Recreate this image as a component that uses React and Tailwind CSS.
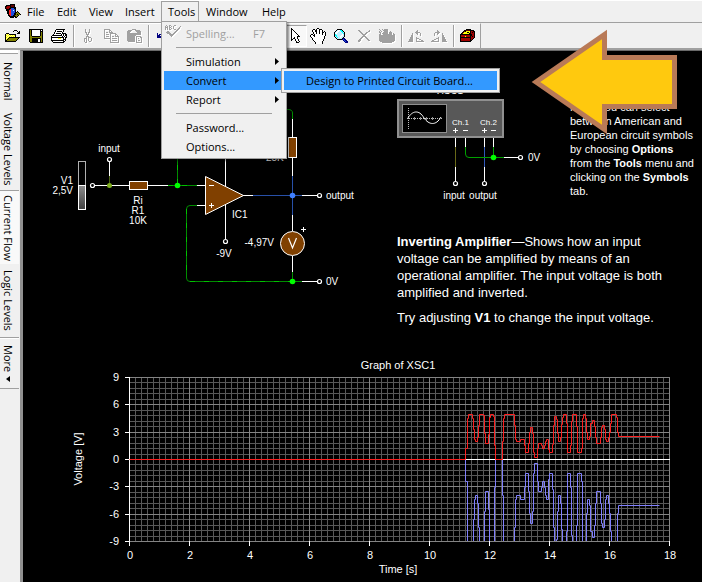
// Circuit simulator window: menu bar, toolbar, view rail and the schematic
// canvas with the oscilloscope graph underneath.

const COLORS = {
  k: '#000000',
  w: '#ffffff',
  y: '#ffff00',
  Y: '#ffff99',
  o: '#808000',
  g: '#a0a0a0',
  r: '#a00000',
  R: '#600000',
  e: '#ff2020',
  b: '#000080',
  B: '#2050e0',
  c: '#00ffff',
  C: '#c0f0ff',
};

const ICONS = {
  app: [
    '.....kkkkk......',
    '.kkkkkRRRk......',
    'kkrrrkRRRk......',
    'krrrrkkkkkk.....',
    'kRrrkkBBBkk.....',
    '.kkkkeBBBBk.....',
    '.kkkeeBBCBk.....',
    '..kkeeBBBBk.k...',
    '..kkeeBBBBkkok..',
    '..kkeeBBBkkoook.',
    '...keeBBBkkokook',
    '...kkeBBkkoook..',
    '....kkkkkkkok...',
    '.....kkkk.kk....',
  ],
  open: [
    '.........kkk....',
    '........k...k.k.',
    '.............kk.',
    '.kkk........kkk.',
    'kYyYkkkkkkk.....',
    'kyYyYyYyYyk.....',
    'kYyYyYyYyYk.....',
    'kyYykkkkkkkkkkk.',
    'kYykoooooooook..',
    'kykoooooooook...',
    'kkoooooooook....',
    'kkkkkkkkkkk.....',
  ],
  save: [
    'kkkkkkkkkkkkkk',
    'kokwwwwwwwwkwk',
    'kokwwwwwwwwkkk',
    'kokwwwwwwwwkok',
    'kokwwwwwwwwkok',
    'kokwwwwwwwwkok',
    'kokwwwwwwwwkok',
    'kookkkkkkkkook',
    'kooooooooooook',
    'kookkkkkkkkkok',
    'kookkkkkkwwkok',
    'kookkkkkkwwkok',
    'kookkkkkkwwkok',
    '.kkkkkkkkkkkkk',
  ],
  print: [
    '.....kkkkkkkkk..',
    '....kwwwwwwwk...',
    '....kwkkkkkwk...',
    '...kwwwwwwwk....',
    '...kwkkkkkwkkkk.',
    '..kwwwwwwwkwkwkk',
    '.kkkkkkkkkkwkwkk',
    'kwwwwwwwwwwkwkwk',
    'kkkkkkkkkkkkkwkk',
    'kwwwwwwyyywwkwk.',
    'kwwwwwwwwwwwkkk.',
    'kkkkkkkkkkkkkwk.',
    '.kwwwwwwwwwwkk..',
    '..kkkkkkkkkkk...',
  ],
  cut: [
    '.g...g...',
    '.g...g...',
    '.g...g...',
    '.gg.gg...',
    '..g.g....',
    '..ggg....',
    '...g.....',
    '..ggg....',
    '..g.ggg..',
    'ggg.g..g.',
    'g.g.g..g.',
    'g.g.g..g.',
    'g.g..gg..',
    '.gg......',
  ],
  copy: [
    'gggggg.........',
    'g....gg........',
    'g....g.g.......',
    'g.gg.gggg......',
    'g.....gggggg...',
    'g.ggg.g....gg..',
    'g.....g....g.g.',
    'g.ggg.g.gg.gggg',
    'g.....g.......g',
    'ggggggg.ggggg.g',
    '......g.......g',
    '......g.ggggg.g',
    '......g.......g',
    '......ggggggggg',
  ],
  paste: [
    '.....gggg......',
    '.gggg...ggggg..',
    'gggg.....ggggg.',
    'ggg.......gggg.',
    'gggggggggggggg.',
    'gggggggggggggg.',
    'ggggggggg......',
    'gggggggg.ggggg.',
    'gggggggg.g...gg',
    'gggggggg.g.g..g',
    'gggggggg.g....g',
    'gggggggg.g.gg.g',
    '.ggggggg.g....g',
    '.........gggggg',
  ],
  undo: [
    'b...bbbbb...',
    'b.bb.....b..',
    'bbb.......b.',
    'bbbb......b.',
    'bbbbb.....b.',
    '.........b..',
  ],
  pointer: [
    '..k.........',
    '..kk........',
    '..kwk.......',
    '..kwwk......',
    '..kwwwk.....',
    '..kwwwwk....',
    '..kwwwwwk...',
    '..kwwwwwwk..',
    '..kwwwwwkkk.',
    '..kwwkwwk...',
    '..kwkkwwk...',
    '..kk..kwwk..',
    '..k...kwwk..',
    '.......kwwk.',
    '.......kkk..',
  ],
  hand: [
    '.......kk.......',
    '...kk.kwwkkk....',
    '..kwwkkwwkwwk...',
    '..kwwkkwwkwwk.k.',
    '...kwwkwwkwwkkwk',
    '...kwwkwwkwwkwwk',
    '.kk.kwwwwwwwkwwk',
    'kwwkkwwwwwwwwwwk',
    'kwwwkwwwwwwwwwk.',
    '.kwwwwwwwwwwwwk.',
    '..kwwwwwwwwwwwk.',
    '..kwwwwwwwwwwk..',
    '...kwwwwwwwwwk..',
    '....kwwwwwwwk...',
    '.....kwwwwwwk...',
    '.....kwwwwwwk...',
  ],
  zoom: [
    '...kkkkk......',
    '..kCwwcck.....',
    '.kCwwCCcck....',
    'kCwwCCCCcCk...',
    'kwwCCCCCCck...',
    'kcCCCCCCwCk...',
    'kccCCCCwwCk...',
    'kCcCCCwwCCk...',
    '.kCcCCwCCk....',
    '..kCCCCCkbb...',
    '...kkkkkbBbb..',
    '.........bBbb.',
    '..........bBbb',
    '...........bbb',
  ],
  remove: [
    'gg.........g',
    '.gg.......gg',
    '..gg....gg..',
    '...gg..gg...',
    '....gggg....',
    '.....gg.....',
    '....gggg....',
    '...gg..gg...',
    '..gg....gg..',
    '.gg......gg.',
    'ggg.......gg',
    'gg..........',
  ],
  board: [
    'g..g.gggg.......',
    '.g..ggggg.......',
    'g.g..gggg..g....',
    'gg..ggggg.ggg...',
    '.g.gggggg.ggg.g.',
    'gg..ggggggggg.gg',
    'gggggggggggggggg',
    'gggggggggggggggg',
    'gggggggggggggggg',
    'gggggggggggggggg',
    'gggggggggggggggg',
    'gggggggggggggggg',
    '.gggggggggggggg.',
    '...gggggggggg...',
  ],
  flipLeft: [
    '.........g......',
    '........gg......',
    '.......ggggg....',
    '....g...gg..g...',
    '....g....g..g...',
    '...gg.......g...',
    '...gg...........',
    '..ggg...g.......',
    '..ggg...ggg.....',
    '.gggg...g..gg...',
    '.gggg...g....gg.',
    'ggggg...gggggggg',
  ],
  flipRight: [
    '......g.........',
    '......gg........',
    '....ggggg.......',
    '...g..gg...g....',
    '...g..g....g....',
    '...g.......gg...',
    '...........gg...',
    '.......g...ggg..',
    '.....ggg...ggg..',
    '...gg..g...gggg.',
    '.gg....g...gggg.',
    'gggggggg...ggggg',
  ],
  toolbox: [
    '......kkkkk.....',
    '....kkRRRRkkkk..',
    '...kRkyyyykrrkk.',
    '..kRyyykkykrkrk.',
    '.kRyyyyyykkrrrk.',
    'kkkkkkkkkkkkrrk.',
    'krrrrrrrrrkkrrk.',
    'krrrryrrrrkrkrk.',
    'kkkkkkkkkkkrrrk.',
    'krrrrrrrrrkrrk..',
    'krrrrrrrrrkrk...',
    'krrrrrrrrrkk....',
    'kkkkkkkkkkk.....',
  ],
  spelling: [
    '.g..gg...gg.....',
    'g.g.g.g.g......g',
    'ggg.gg..g.....g.',
    'g.g.g.g.g....gg.',
    'g.g.gg...gg.gg..',
    '...........gg...',
    '..gg......gg....',
    '.gggg....gg.....',
    '..gggg..gg......',
    '....ggggg.......',
    '.....ggg........',
    '......g.........',
  ],
};

function PixelIcon({ name, disabled }) {
  const rows = ICONS[name];
  const width = Math.max(...rows.map((row) => row.length));
  const draw = (shift, fill) =>
    rows.flatMap((row, y) =>
      [...row].map((ch, x) =>
        ch === '.' ? null : (
          <rect key={`${x}-${y}-${shift}`} x={x + shift} y={y + shift} width="1" height="1" fill={fill || COLORS[ch]} />
        )
      )
    );
  return (
    <svg
      width={width + 1}
      height={rows.length + 1}
      viewBox={`0 0 ${width + 1} ${rows.length + 1}`}
      shapeRendering="crispEdges"
      className="shrink-0"
      aria-hidden="true"
    >
      {disabled && draw(1, '#ffffff')}
      {draw(0)}
    </svg>
  );
}

function ToolButton({ icon, label, disabled, pressed }) {
  return (
    <button
      type="button"
      aria-label={label}
      disabled={disabled}
      className={
        pressed
          ? 'flex h-[22px] w-[23px] items-center justify-center border border-t-[#a0a0a0] border-l-[#a0a0a0] border-r-white border-b-white bg-[#f8f8f8]'
          : 'flex h-[22px] w-[23px] items-center justify-center'
      }
    >
      <PixelIcon name={icon} disabled={disabled} />
    </button>
  );
}

function Separator() {
  return (
    <div className="flex w-[6px] justify-center">
      <div className="h-[22px] w-[2px] border-r border-l border-r-white border-l-[#a0a0a0]" />
    </div>
  );
}

function MenuItem({ label, shortcut, submenu, disabled, active, children }) {
  return (
    <li className="relative">
      <button
        type="button"
        disabled={disabled}
        className={
          'flex h-[19px] w-full items-center pr-[5px] pl-[22px] text-left ' +
          (active ? 'bg-[#3399ff] ' : '') +
          (disabled ? 'text-[#a0a0a0]' : 'text-black')
        }
      >
        <span className="flex-1">{label}</span>
        {shortcut && <span className="pr-[14px]">{shortcut}</span>}
        {submenu && (
          <svg width="4" height="7" viewBox="0 0 4 7" aria-hidden="true">
            <path d="M0 0L4 3.5L0 7Z" fill="#000" />
          </svg>
        )}
      </button>
      {children}
    </li>
  );
}

function MenuDivider() {
  return <li className="mx-[12px] my-[4px] h-px bg-[#a0a0a0]" aria-hidden="true" />;
}

function ToolsMenu() {
  return (
    <ul className="absolute top-[19px] -left-px z-20 w-[126px] border border-[#a0a0a0] bg-[#f0f0f0] p-[2px] shadow-[2px_2px_2px_rgba(0,0,0,0.45)]">
      <li className="relative">
        <span className="absolute top-px left-px">
          <PixelIcon name="spelling" disabled />
        </span>
        <MenuItem label="Spelling..." shortcut="F7" disabled />
      </li>
      <MenuDivider />
      <MenuItem label="Simulation" submenu />
      <MenuItem label="Convert" submenu active>
        <ul className="absolute -top-[3px] left-[117px] z-30 w-[219px] border border-[#a0a0a0] bg-[#f0f0f0] p-[2px]">
          <MenuItem label="Design to Printed Circuit Board..." active />
        </ul>
      </MenuItem>
      <MenuItem label="Report" submenu />
      <MenuDivider />
      <MenuItem label="Password..." />
      <MenuItem label="Options..." />
    </ul>
  );
}

function MenuBar() {
  return (
    <nav className="flex h-[22px] items-center border-t border-white pl-[5px]">
      <PixelIcon name="app" />
      <button type="button" className="ml-[5px] w-[30px] text-left">File</button>
      <button type="button" className="w-[32px] text-left">Edit</button>
      <button type="button" className="w-[36px] text-left">View</button>
      <button type="button" className="w-[36px] text-left">Insert</button>
      <div className="relative h-[21px] w-[38px] border border-b-0 border-[#a0a0a0]">
        <button type="button" className="h-[20px] w-full pl-[6px] text-left">Tools</button>
        <ToolsMenu />
      </div>
      <button type="button" className="ml-[7px] w-[56px] text-left">Window</button>
      <button type="button" className="text-left">Help</button>
    </nav>
  );
}

function Toolbar() {
  return (
    <div className="flex border-t border-[#a0a0a0]">
      <div className="flex h-[25px] items-center border-t border-r border-t-white border-r-[#a0a0a0] pl-[2px]">
        <ToolButton icon="open" label="Open" />
        <ToolButton icon="save" label="Save" />
        <ToolButton icon="print" label="Print" />
        <Separator />
        <ToolButton icon="cut" label="Cut" disabled />
        <ToolButton icon="copy" label="Copy" disabled />
        <ToolButton icon="paste" label="Paste" disabled />
        <Separator />
        <ToolButton icon="undo" label="Undo" />
        <div className="w-[109px]" />
        <ToolButton icon="pointer" label="Select" pressed />
        <ToolButton icon="hand" label="Pan" />
        <ToolButton icon="zoom" label="Zoom" />
        <ToolButton icon="remove" label="Delete" disabled />
        <ToolButton icon="board" label="Gallery" disabled />
        <Separator />
        <ToolButton icon="flipLeft" label="Rotate left" disabled />
        <ToolButton icon="flipRight" label="Rotate right" disabled />
        <Separator />
        <ToolButton icon="toolbox" label="Toolbox" />
      </div>
    </div>
  );
}

function ViewRail() {
  return (
    <aside className="w-[20px] shrink-0 leading-[14px]">
      <div className="mr-[2px] h-[4px] border-b border-[#a0a0a0] bg-white" />
      <button type="button" className="flex h-[54px] w-[18px] items-center justify-center pr-[3px] [writing-mode:vertical-rl]">Normal</button>
      <button type="button" className="flex h-[82px] w-[18px] items-center justify-center pr-[3px] [writing-mode:vertical-rl]">Voltage Levels</button>
      <button type="button" className="flex h-[74px] w-[19px] items-center justify-center border-t border-[#a0a0a0] bg-[#f9f9f9] pr-[3px] [writing-mode:vertical-rl]">Current Flow</button>
      <button type="button" className="flex h-[74px] w-[19px] items-center justify-center border-b border-[#a0a0a0] pr-[4px] [writing-mode:vertical-rl]">Logic Levels</button>
      <button type="button" className="flex h-[51px] w-[19px] items-center justify-center gap-[4px] border-t border-b border-t-white border-b-[#a0a0a0] pr-[4px] [writing-mode:vertical-rl]">
        More
        <svg width="5" height="6" viewBox="0 0 5 6" aria-hidden="true">
          <path d="M5 0V6L1 3Z" fill="#000" />
        </svg>
      </button>
    </aside>
  );
}

function Terminal({ x, y }) {
  return <circle cx={x} cy={y} r="2" fill="#000" stroke="#fff" strokeWidth="1.2" />;
}

function Circuit() {
  return (
    <svg viewBox="23 51 367 300" className="h-[300px] w-[367px] shrink-0" fontSize="10" fontFamily="Liberation Sans, Arial, sans-serif">
      <defs>
        <linearGradient id="slider" x1="0" y1="0" x2="0" y2="1">
          <stop offset="0" stopColor="#8c8c8c" />
          <stop offset="1" stopColor="#404040" />
        </linearGradient>
      </defs>

      {/* wires */}
      <g fill="none" strokeWidth="1">
        <path stroke="#fff" d="M95 185.5H129M148 185.5H168M197 185.5H205M109.500 162V176M197 205.500H205M225.500 150V186M225.500 205V239M243 195.500H253M302 195.500H317M292.500 119V137M292.500 157V176M292.500 215V231M292.500 256V272M302 281.500H317" />
        <path stroke="#4c6414" d="M109.500 176V185" />
        <path stroke="#008c00" d="M168 185.500H197M177.500 109V185M177.500 109.500H288Q292.500 109.500 292.500 113V119M197 205.500H190Q186.500 205.500 186.500 209V278Q186.500 281.500 190 281.500H302M292.500 272V281" />
        <path stroke="#00c000" strokeDasharray="5 9" d="M168 185.500H197M186.500 209V278M190 281.500H302M177.500 109V185" />
        <path stroke="#2850a8" d="M253 195.500H302M292.500 176V215" />
      </g>

      {/* input slider */}
      <rect x="78.500" y="161.500" width="7" height="24" fill="#000" stroke="#b0b0b0" />
      <rect x="78.500" y="185.500" width="7" height="24" fill="url(#slider)" stroke="#fff" />

      <rect x="129.500" y="181.500" width="18" height="8" fill="#804000" stroke="#fff" />
      <rect x="288.500" y="137.500" width="8" height="20" fill="#804000" stroke="#fff" />
      <path d="M205.500 176.500V214.500L243.500 195.500Z" fill="#804000" stroke="#fff" />
      <path d="M209 185.500H214M209 205.500H214M211.500 203V208" stroke="#fff" />
      <circle cx="292.500" cy="243.500" r="12" fill="#804000" stroke="#fff" />
      <path d="M288.500 238L292.500 248L296.500 238" fill="none" stroke="#fff" strokeWidth="1.200" />
      <path d="M301 229.500H306M303.500 227V232" stroke="#fff" />

      <circle cx="109.500" cy="185.500" r="2.500" fill="#80b020" />
      <circle cx="177.500" cy="185.500" r="2.800" fill="#00ff00" />
      <circle cx="292.500" cy="281.500" r="2.800" fill="#00ff00" />
      <circle cx="292.500" cy="195.500" r="2.800" fill="#4080ff" />
      <Terminal x={92.5} y={185.5} />
      <Terminal x={109.5} y={159.5} />
      <Terminal x={225.5} y={241.5} />
      <Terminal x={319.5} y={195.5} />
      <Terminal x={319.5} y={281.5} />

      <g fill="#fff">
        <text x="109" y="152" textAnchor="middle">input</text>
        <text x="73" y="184" textAnchor="end">V1</text>
        <text x="73" y="194" textAnchor="end">2,5V</text>
        <text x="138" y="204" textAnchor="middle">Ri</text>
        <text x="138" y="214" textAnchor="middle">R1</text>
        <text x="138" y="224" textAnchor="middle">10K</text>
        <text x="266" y="161">25K</text>
        <text x="232" y="218">IC1</text>
        <text x="224" y="257" textAnchor="middle">-9V</text>
        <text x="274" y="246" textAnchor="end">-4,97V</text>
        <text x="326" y="199">output</text>
        <text x="326" y="285">0V</text>
      </g>
    </svg>
  );
}

function Oscilloscope() {
  return (
    <svg viewBox="390 51 180 164" className="h-[164px] w-[180px] shrink-0" fontSize="10" fontFamily="Liberation Sans, Arial, sans-serif">
      <rect x="398" y="100" width="105" height="37" fill="#585858" stroke="#909090" strokeWidth="2" />
      <rect x="402.500" y="104.500" width="44" height="28" fill="#000" stroke="#909090" />
      <path d="M408.500 108V129M407 118.500H442" stroke="#c0c0c0" strokeDasharray="1 1" />
      <path d="M414.500 117V120M420.500 117V120M426.500 117V120M432.500 117V120" stroke="#909090" />
      <path d="M408 118C412 111 419 109 424 118C429 125 436 126 441 117" fill="none" stroke="#fff" />
      <path d="M453 130.500H458M455.500 128V133M463 130.500H468M482 130.500H487M484.500 128V133M491 130.500H496" stroke="#fff" />

      <g fill="none">
        <path stroke="#fff" d="M455.500 138V147M465.500 138V147M484.500 138V147M493.500 138V147M455.500 167V181M484.500 167V181M504 157.500H518" />
        <path stroke="#686818" d="M455.500 147V167" />
        <path stroke="#3058b8" d="M484.500 147V167" />
        <path stroke="#00a000" d="M465.500 147V154Q465.500 157.500 469 157.500H504M493.500 147V157" />
      </g>
      <circle cx="493.500" cy="157.500" r="2.800" fill="#00ff00" />
      <Terminal x={455.5} y={183.5} />
      <Terminal x={484.5} y={183.5} />
      <Terminal x={520.5} y={157.5} />

      <g fill="#fff">
        <text x="437" y="94">XSC1</text>
        <text x="452" y="125" fontSize="8">Ch.1</text>
        <text x="480" y="125" fontSize="8">Ch.2</text>
        <text x="528" y="161">0V</text>
        <text x="454" y="199" textAnchor="middle">input</text>
        <text x="483" y="199" textAnchor="middle">output</text>
      </g>
    </svg>
  );
}

// Input trace as [x, height above zero]; each level holds until the next entry.
const SAMPLES = [
  [0, 0], [336, 11], [338, 41], [339, 45], [343, 41], [344, 30], [345, 20], [346, 18], [348, 22], [349, 34],
  [350, 45], [354, 44], [355, 26], [356, 16], [359, 25], [360, 42], [361, 45], [364, 43], [365, 14], [366, 0],
  [373, 18], [374, 41], [375, 45], [385, 34], [386, 20], [387, 18], [391, 20], [395, 14], [396, 7], [399, 16],
  [400, 27], [401, 32], [403, 26], [404, 7], [405, 2], [408, 11], [409, 16], [412, 14], [413, 11], [415, 14],
  [416, 18], [417, 20], [419, 10], [420, 7], [423, 15], [424, 34], [425, 43], [427, 40], [428, 26], [429, 18],
  [431, 22], [432, 35], [433, 42], [434, 45], [437, 36], [438, 7], [441, 14], [442, 38], [443, 45], [447, 33],
  [448, 7], [452, 11], [453, 41], [454, 45], [456, 41], [457, 27], [458, 20], [460, 23], [461, 36], [463, 39],
  [465, 33], [466, 22], [467, 16], [471, 22], [472, 32], [473, 34], [475, 30], [476, 20], [477, 18], [479, 22],
  [480, 27], [481, 36], [482, 45], [487, 42], [488, 27], [489, 23],
];

function tracePoints(gain) {
  const points = [];
  let level = 459.5;
  for (const [x, v] of SAMPLES) {
    points.push(`${x + 129.5},${level}`);
    level = 459.5 - v * gain;
    points.push(`${x + 129.5},${level}`);
  }
  points.push(`659.5,${level}`);
  return points.join(' ');
}

const seq = (n) => Array.from({ length: n }, (_, i) => i);

function Graph() {
  return (
    <svg viewBox="23 351 679 231" className="h-auto w-full" fontSize="11" fontFamily="Liberation Sans, Arial, sans-serif">
      <clipPath id="plot">
        <rect x="129" y="377" width="541" height="164" />
      </clipPath>
      <g shapeRendering="crispEdges" fill="none">
        <g stroke="#585858">
          {seq(91).map((i) => <path key={i} d={`M${129.5 + i * 6} 377V541`} />)}
          {seq(31).map((i) => <path key={i} d={`M129 ${Math.round(377 + i * 5.467) + 0.5}H670`} />)}
        </g>
        <g stroke="#848484">
          {seq(10).map((i) => <path key={i} d={`M${129.5 + i * 60} 377V541`} />)}
          {seq(7).map((i) => <path key={i} d={`M129 ${Math.round(377 + i * 27.333) + 0.5}H670`} />)}
        </g>
        <g stroke="#fff">
          {seq(10).map((i) => <path key={i} d={`M${129.5 + i * 60} 541V546`} />)}
          {seq(7).map((i) => <path key={i} d={`M125 ${Math.round(377 + i * 27.333) + 0.5}H130`} />)}
          <path d="M129.500 377V541" />
        </g>
      </g>
      <g clipPath="url(#plot)" fill="none" strokeWidth="1">
        <polyline points={tracePoints(-2)} stroke="#8080ff" />
        <path d="M129 459.500H670" stroke="#fff" />
        <polyline points={tracePoints(1)} stroke="#ff2020" />
      </g>
      <g fill="#fff">
        <text x="398" y="369" textAnchor="middle">Graph of XSC1</text>
        <text x="398" y="573" textAnchor="middle">Time [s]</text>
        <text transform="translate(82 459) rotate(-90)" textAnchor="middle">Voltage [V]</text>
        {seq(10).map((i) => (
          <text key={i} x={130 + i * 60} y="559" textAnchor="middle">{i * 2}</text>
        ))}
        {seq(7).map((i) => (
          <text key={i} x="119" y={Math.round(381 + i * 27.333)} textAnchor="end">{9 - i * 3}</text>
        ))}
      </g>
    </svg>
  );
}

export default function App() {
  return (
    <div className="relative flex min-h-screen flex-col bg-[#f0f0f0] font-['Open_Sans','Noto_Sans',sans-serif] text-[11px] leading-[18px] text-black">
      <MenuBar />
      <Toolbar />
      <div className="flex flex-1 border-t-2 border-[#a0a0a0]">
        <ViewRail />
        <main className="min-w-0 flex-1 border-t border-l-[3px] border-t-[#696969] border-l-[#909090] bg-black font-['Liberation_Sans',Arial,sans-serif] text-white">
          <div className="flex">
            <Circuit />
            <div className="min-w-0 flex-1">
              <div className="flex">
                <Oscilloscope />
                <p className="pt-[49px] text-[11px] leading-[14px] whitespace-nowrap">
                  Note: you can select<br />
                  between American and<br />
                  European circuit symbols<br />
                  by choosing <b>Options</b><br />
                  from the <b>Tools</b> menu and<br />
                  clicking on the <b>Symbols</b><br />
                  tab.
                </p>
              </div>
              <div className="pt-[18px] pl-[7px] text-[13px] leading-[17px] whitespace-nowrap">
                <p>
                  <b>Inverting Amplifier</b>—Shows how an input<br />
                  voltage can be amplified by means of an<br />
                  operational amplifier. The input voltage is both<br />
                  amplified and inverted.
                </p>
                <p className="mt-[8px]">
                  Try adjusting <b>V1</b> to change the input voltage.
                </p>
              </div>
            </div>
          </div>
          <Graph />
        </main>
      </div>

      <svg viewBox="530 28 150 108" className="absolute top-[28px] left-[530px] z-10 h-[108px] w-[150px]" aria-hidden="true">
        <path
          d="M536 82L604.500 129.500V106.500H674.500V57.500H604.500V34.500Z"
          fill="#ffc90e"
          stroke="#b97a57"
          strokeWidth="5"
        />
      </svg>
    </div>
  );
}
